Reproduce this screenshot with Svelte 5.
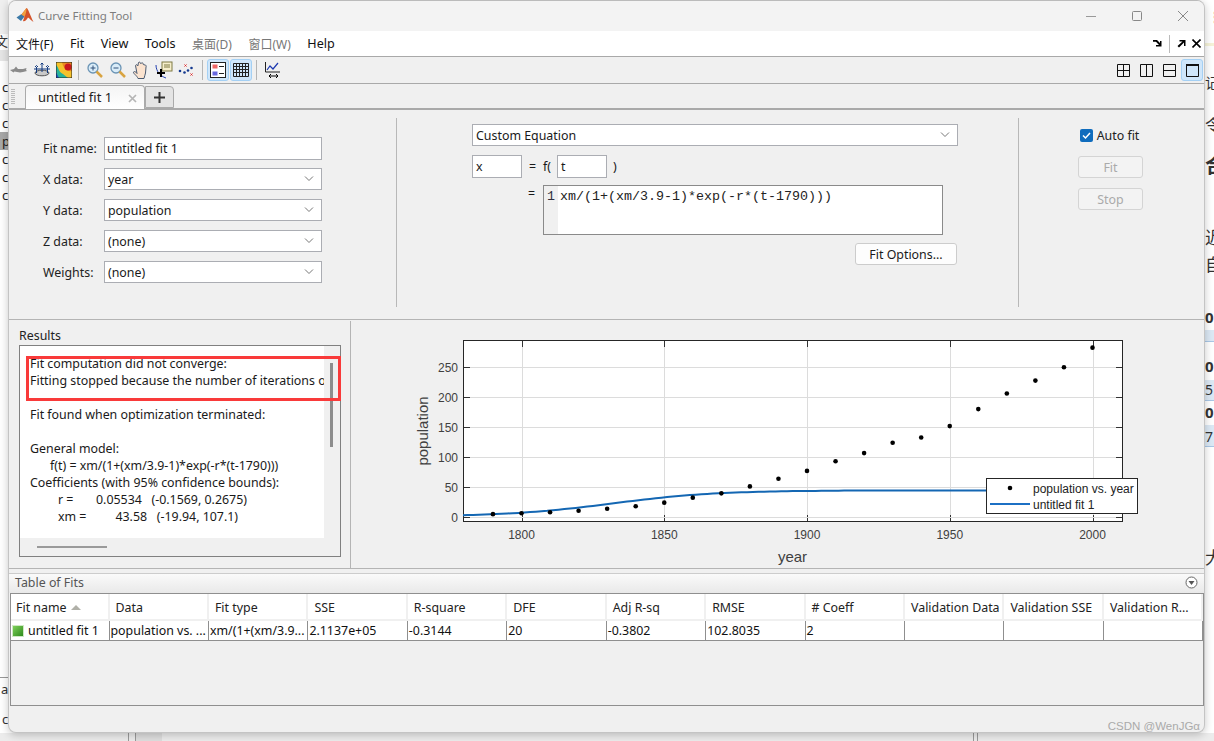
<script>
  const years = Array.from({ length: 22 }, (_, i) => 1790 + i * 10);
  const pop = [3.9, 5.3, 7.2, 9.6, 12.9, 17.1, 23.1, 31.4, 38.6, 50.2, 62.9, 76.0, 92.0, 105.7, 122.8, 131.7, 150.7, 179.0, 205.0, 226.5, 248.7, 281.4];
  const px = (y) => 521.5 + (y - 1800) * 2.855 - 351;
  const py = (v) => 516.5 - v * 0.6 - 321;
  let d = '';
  for (let t = 1779; t <= 1966; t += 2) {
    const f = 43.58 / (1 + (43.58 / 3.9 - 1) * Math.exp(-0.05534 * (t - 1790)));
    d += (d ? 'L' : 'M') + Math.max(px(t), 112).toFixed(1) + ' ' + py(f).toFixed(1);
  }
  const xticks = [1800, 1850, 1900, 1950, 2000];
  const yticks = [0, 50, 100, 150, 200, 250];
  const menus = ['文件(F)', 'Fit', 'View', 'Tools', '桌面(D)', '窗口(W)', 'Help'];
  const fields = [
    ['X data:', 'year'],
    ['Y data:', 'population'],
    ['Z data:', '(none)'],
    ['Weights:', '(none)']
  ];
  const cols = ['Fit name', 'Data', 'Fit type', 'SSE', 'R-square', 'DFE', 'Adj R-sq', 'RMSE', '# Coeff', 'Validation Data', 'Validation SSE', 'Validation R...'];
  const widths = cols.map((_, i) => (i === 0 ? 98.5 : 99.45));
  const cells = ['untitled fit 1', 'population vs. ...', 'xm/(1+(xm/3.9...', '2.1137e+05', '-0.3144', '20', '-0.3802', '102.8035', '2', '', '', ''];
  const leftBits = ['c', 'c', 'c', 'p', 'c', 'c', 'c'];
  const rightBits = [
    ['记', 74, 400, 14], ['令', 116, 400, 16], ['合', 157, 700, 20], ['近', 229, 400, 17], ['自', 256, 400, 17],
    ['0', 308, 700, 15], ['0', 357, 700, 15], ['5', 381, 400, 14], ['0', 403, 700, 15], ['7', 428, 400, 14], ['大', 549, 400, 17]
  ];
  const stripes = [[330, 12], [380, 21], [425, 22]];
</script>

<div class="desk">
  <div class="bits-left">
    {#each leftBits as b, i}
      <div class="bit" class:sel={i === 3}>{b}</div>
    {/each}
  </div>
  <div class="top-left"></div>
  <span class="frag frag-top">文(</span>
  <span class="frag frag-a">a</span>
  <span class="frag frag-c">c</span>
  <div class="band-a"></div>
  <div class="band-b"></div>
  <div class="yellow"></div>
  <span class="dots">⋮</span>
  {#each stripes as s}
    <div class="stripe" style:top="{s[0]}px" style:height="{s[1]}px"></div>
  {/each}
  {#each rightBits as r}
    <span class="rbit" style:top="{r[1]}px" style:font-weight={r[2]} style:font-size="{r[3]}px">{r[0]}</span>
  {/each}
  <div class="under"><i class="u1"></i><i class="u2"></i><i class="u3"></i></div>

  <div class="window">
    <header class="title">
      <svg class="logo" viewBox="0 0 18 18" width="18" height="18" aria-hidden="true">
        <path d="M.5 10.500 5.500 7 8.500 9.500 5 14Z" fill="#3d7aa8"/>
        <path d="M5.500 7.500 10.500 1c1.500 0 3.500 7 7 14-2.500-1.500-4-4-5.500-4.500-1.500 2.500-3.500 4.500-5 3.500L8.500 9.500Z" fill="#d4532a"/>
        <path d="M10.500 1C9.500 1.800 8 4.500 5.500 7.500L8.500 9.500C10 7 10.500 4 10.500 1Z" fill="#f0a040"/>
      </svg>
      <span class="title-text">Curve Fitting Tool</span>
      <div class="winbtns">
        <svg width="12" height="12" aria-hidden="true"><path d="M1 6.500H11" stroke="#999"/></svg>
        <svg width="12" height="12" aria-hidden="true"><rect x="1.500" y="1.500" width="9" height="9" rx="1" fill="none" stroke="#888"/></svg>
        <svg width="12" height="12" aria-hidden="true"><path d="M1 1 11 11M11 1 1 11" stroke="#888"/></svg>
      </div>
    </header>

    <nav class="menubar">
      {#each menus as m, i}
        <span class:dim={i === 4 || i === 5} class:cjk={i === 0 || i === 4 || i === 5}>{m}</span>
      {/each}
      <div class="dock">
        <svg width="9" height="9" viewBox="0 0 9 9" aria-hidden="true"><path d="M0 1h4l3 3V2h1.500v5.500H3V6h3L3 2.800H0Z"/></svg>
        <i></i>
        <svg width="9" height="9" viewBox="0 0 9 9" aria-hidden="true"><path d="M2.500 1h6v6H7V3.500L2 8.500.500 7 5.500 2.500h-3Z"/></svg>
        <svg width="9" height="9" viewBox="0 0 9 9" aria-hidden="true"><path d="M.5.5 8.500 8.500M8.500.5.5 8.500" stroke="#000" stroke-width="1.600"/></svg>
      </div>
    </nav>

    <div class="toolbar">
      <svg class="ti" width="18" height="18" viewBox="0 0 18 18" aria-hidden="true"><path d="M0 9 4 8l2-2.500 2 2.500h5l3.500-1-.5 2 1 1-4 1-3 .5-3-.5-2.500-.5-1 1Z" fill="#8a8a8a"/></svg>
      <svg class="ti" width="18" height="18" viewBox="0 0 18 18" aria-hidden="true"><ellipse cx="9" cy="12" rx="7" ry="2.800" fill="#c9c9c9" stroke="#555"/><path d="M3.500 6v6M9 2v9M14.500 6v6M1 8h16M2 6l1.500-1.500L5 6M7.500 3.500 9 2l1.500 1.500M13 6l1.500-1.500L16 6" stroke="#123a80" fill="none"/></svg>
      <svg class="ti heat" width="16" height="16" viewBox="0 0 16 16" aria-hidden="true"><rect width="16" height="16" fill="#f5c22b"/><path d="M0 10 5 16H0Z" fill="#1b52c8"/><path d="M0 3c3 2 2 7 7 9l5 4H3L0 10Z" fill="#27b39a"/><path d="M6 0h10v9c-5 1-9-3-10-9Z" fill="#e98a20"/><circle cx="12" cy="5" r="3.500" fill="#c9181c"/><path d="M0 0h16v16H0Z" fill="none" stroke="#222"/></svg>
      <b class="sep"></b>
      <svg class="ti" width="18" height="18" viewBox="0 0 18 18" aria-hidden="true"><circle cx="7" cy="7" r="5" fill="#d9ecf8" stroke="#6b94b5" stroke-width="1.300"/><path d="M10.500 10.500 16 16" stroke="#d9a441" stroke-width="2.500"/><path d="M4.500 7h5M7 4.500v5" stroke="#30507a"/></svg>
      <svg class="ti" width="18" height="18" viewBox="0 0 18 18" aria-hidden="true"><circle cx="7" cy="7" r="5" fill="#d9ecf8" stroke="#6b94b5" stroke-width="1.300"/><path d="M10.500 10.500 16 16" stroke="#d9a441" stroke-width="2.500"/><path d="M4.500 7h5" stroke="#30507a"/></svg>
      <svg class="ti" width="18" height="18" viewBox="0 0 18 18" aria-hidden="true"><path d="M6 17.500c-1-3-5-5-4.500-6.500C2.500 10 4 11 5 12.500L3.500 4.500C4 3 5.500 4 5.800 5L6.500 1.500C7.500.5 8.500 1.500 8.500 2.500L9.800 2c1-.5 1.500.5 1.500 1.500L13 4c1 0 1.500 1 1 2l-.5 6c-.5 2-1 3.500-1.500 5.500Z" fill="#fbe3cf" stroke="#4a5a70"/></svg>
      <svg class="ti" width="18" height="18" viewBox="0 0 18 18" aria-hidden="true"><rect x="7" y="1" width="10" height="9" fill="#f6eecb" stroke="#7f7a45"/><path d="M9 4h6M9 6h6" stroke="#7f7a45"/><path d="M1 4c0 6 4 11 10 13" stroke="#2340b0" fill="none"/><path d="M2 12h8M6 8v8" stroke="#000" stroke-width="2"/></svg>
      <svg class="ti" width="16" height="18" viewBox="0 0 16 18" aria-hidden="true"><path d="M6.500 3.500l2 2m0-2-2 2M12.500 12.500l2 2m0-2-2 2" stroke="#d22"/><circle cx="2" cy="10" r="1.300" fill="#14398f"/><circle cx="6.500" cy="11.500" r="1.300" fill="#14398f"/><circle cx="10" cy="9.500" r="1.300" fill="#14398f"/><circle cx="13.500" cy="7" r="1.300" fill="#14398f"/></svg>
      <b class="sep sep2"></b>
      <div class="tog-group">
        <span class="tog"><svg width="18" height="18" viewBox="0 0 18 18" aria-hidden="true"><rect x="1.500" y="1.500" width="15" height="15" fill="#fff" stroke="#222"/><rect x="3.500" y="3.500" width="5" height="4" fill="#e66"/><rect x="3.500" y="10.500" width="5" height="4" fill="#66d"/><path d="M10 5.500h5M10 12.500h5" stroke="#222"/></svg></span>
        <span class="tog"><svg width="18" height="18" viewBox="0 0 18 18" aria-hidden="true"><path d="M1.500 2.500h15v13h-15ZM1.500 5.500h15M1.500 8.500h15M1.500 11.500h15M4.500 2.500v13M7.500 2.500v13M10.500 2.500v13M13.500 2.500v13" fill="none" stroke="#222"/></svg></span>
      </div>
      <b class="sep sep3"></b>
      <svg class="ti" width="18" height="18" viewBox="0 0 18 18" aria-hidden="true"><path d="M1.500 1v10H16" stroke="#222" fill="none"/><path d="M3 9l3-4 3 3 5-6" stroke="#1c38b0" fill="none" stroke-width="1.200"/><path d="M5 15h9M5 15l2-2M5 15l2 2M14 15l-2-2M14 15l-2 2" stroke="#000" fill="none"/></svg>
      <div class="layouts">
        <span><svg width="13" height="13" aria-hidden="true"><path d="M.5.500h12v12H.5ZM6.500.500v12M.5 6.500h12" fill="none" stroke="#111"/></svg></span>
        <span><svg width="13" height="13" aria-hidden="true"><path d="M.5.500h12v12H.5ZM6.500.500v12" fill="none" stroke="#111"/></svg></span>
        <span><svg width="13" height="13" aria-hidden="true"><path d="M.5.500h12v12H.5ZM.5 6.500h12" fill="none" stroke="#111"/></svg></span>
        <span class="on"><svg width="13" height="13" aria-hidden="true"><path d="M.5.500h12v12H.5Z" fill="none" stroke="#111"/><path d="M0 1h13" stroke="#111" stroke-width="2"/></svg></span>
      </div>
    </div>

    <div class="tabs">
      <div class="grip"></div>
      <div class="tab">untitled fit 1
        <svg class="x" width="9" height="9" aria-hidden="true"><path d="M1 1 8 8M8 1 1 8" stroke="#b5b5b5" stroke-width="1.700"/></svg>
      </div>
      <div class="plus"><svg width="11" height="11" aria-hidden="true"><path d="M5.500 0v11M0 5.500h11" stroke="#333" stroke-width="2"/></svg></div>
    </div>

    <section class="form">
      <div class="col-left">
        <div class="row">
          <span class="lab">Fit name:</span>
          <div class="box"><span>untitled fit 1</span></div>
        </div>
        {#each fields as f}
          <div class="row">
            <span class="lab">{f[0]}</span>
            <div class="box"><span>{f[1]}</span><svg class="chev" width="10" height="6" aria-hidden="true"><path d="M1 .5 5 4.500 9 .5" fill="none" stroke="#777"/></svg></div>
          </div>
        {/each}
      </div>
      <div class="col-mid">
        <div class="box wide"><span>Custom Equation</span><svg class="chev" width="10" height="6" aria-hidden="true"><path d="M1 .5 5 4.500 9 .5" fill="none" stroke="#777"/></svg></div>
        <div class="eqrow">
          <div class="box mini"><span>x</span></div>
          <span class="eq1">=</span>
          <span class="eq2">f(</span>
          <div class="box mini"><span>t</span></div>
          <span class="eq3">)</span>
        </div>
        <div class="eqrow2">
          <span class="eq4">=</span>
          <div class="editor"><span class="ln">1</span><span class="code">xm/(1+(xm/3.9-1)*exp(-r*(t-1790)))</span></div>
        </div>
        <div class="optrow"><button class="btn">Fit Options...</button></div>
      </div>
      <div class="col-right">
        <div class="auto"><span class="check"><svg width="13" height="13" aria-hidden="true"><path d="M3 6.500 5.500 9 10 4" fill="none" stroke="#fff" stroke-width="1.500"/></svg></span>Auto fit</div>
        <button class="btn dis">Fit</button>
        <button class="btn dis">Stop</button>
      </div>
    </section>

    <section class="middle">
      <div class="results">
        <div class="rlabel">Results</div>
        <div class="rbox">
          <div class="rtext">
            <p>Fit computation did not converge:</p>
            <p>Fitting stopped because the number of iterations or</p>
            <p>&nbsp;</p>
            <p>Fit found when optimization terminated:</p>
            <p>&nbsp;</p>
            <p>General model:</p>
            <p class="i1">f(t) = xm/(1+(xm/3.9-1)*exp(-r*(t-1790)))</p>
            <p>Coefficients (with 95% confidence bounds):</p>
            <p class="i2 pre">r =       0.05534   (-0.1569, 0.2675)</p>
            <p class="i2 pre">xm =         43.58   (-19.94, 107.1)</p>
          </div>
          <div class="vthumb"></div>
          <div class="hthumb"></div>
        </div>
        <div class="redmark"></div>
      </div>
      <div class="plot">
        <svg width="853" height="246" viewBox="0 0 853 246" role="img" aria-label="population vs. year">
          <rect x="112.500" y="19.500" width="659" height="181" fill="#fff"/>
          {#each xticks as t}
            <path d="M{Math.round(px(t)) + .5} 20V200" stroke="#dcdcdc"/>
            <path d="M{Math.round(px(t)) + .5} 20v6M{Math.round(px(t)) + .5} 200v-6" stroke="#333"/>
            <text x={px(t)} y="218" text-anchor="middle" class="tick">{t}</text>
          {/each}
          {#each yticks as v}
            <path d="M113 {Math.round(py(v)) + .5}H771" stroke="#dcdcdc"/>
            <path d="M113 {Math.round(py(v)) + .5}h6M771 {Math.round(py(v)) + .5}h-6" stroke="#333"/>
            <text x="107" y={py(v) + 5} text-anchor="end" class="tick">{v}</text>
          {/each}
          <rect x="112.500" y="19.500" width="659" height="181" fill="none" stroke="#262626"/>
          <path d={d} fill="none" stroke="#1467b3" stroke-width="2"/>
          {#each years as y, i}
            <circle cx={px(y)} cy={py(pop[i])} r="2.300" fill="#000"/>
          {/each}
          <text x="441.500" y="241" text-anchor="middle" class="axis">year</text>
          <text transform="translate(77 110) rotate(-90)" text-anchor="middle" class="axis">population</text>
          <rect x="635.500" y="157.500" width="151" height="35" fill="#fff" stroke="#262626"/>
          <circle cx="659" cy="167" r="2.300" fill="#000"/>
          <path d="M639 183h40" stroke="#1c70c4" stroke-width="2"/>
          <text x="682" y="172" class="leg">population vs. year</text>
          <text x="682" y="188" class="leg">untitled fit 1</text>
        </svg>
      </div>
    </section>

    <section class="fits">
      <div class="fits-head">
        <span>Table of Fits</span>
        <svg width="13" height="13" aria-hidden="true"><circle cx="6.500" cy="6.500" r="5.500" fill="#fff" stroke="#666"/><path d="M3.500 5h6l-3 4Z" fill="#555"/></svg>
      </div>
      <div class="grid">
        <div class="thead">
          {#each cols as c, i}
            <div class="th" style:width="{widths[i]}px">{c}{#if i === 0}<i class="sort"></i>{/if}</div>
          {/each}
        </div>
        <div class="tbody">
          {#each cols as c, i}
            <div class="td" class:first={i === 0} style:width="{widths[i]}px">{#if i === 0}<i class="swatch"></i>{/if}{cells[i]}</div>
          {/each}
        </div>
      </div>
      <div class="foot"><span class="mark">CSDN @WenJGα</span></div>
    </section>
  </div>
</div>

<style>
  :global(body) { margin: 0; background: #fff; overflow: hidden; }
  .desk { position: relative; width: 1214px; height: 741px; background: #fff; overflow: hidden; font-family: "Noto Sans", "Noto Sans CJK SC", sans-serif; font-size: 12.4px; color: #1a1a1a; }
  .bits-left { position: absolute; left: 0; top: 78px; width: 8px; font-size: 13px; }
  .bit { height: 18px; line-height: 18px; padding-left: 2px; color: #222; }
  .bit.sel { background: #a8a8a8; }
  .top-left { position: absolute; left: 0; top: 0; width: 8px; height: 34px; background: #efefef; }
  .frag { position: absolute; font-size: 13px; color: #333; }
  .frag-top { left: -5px; top: 31px; }
  .frag-a { left: 1px; top: 680px; }
  .frag-c { left: 2px; top: 710px; }
  .band-a { position: absolute; left: 0; top: 50px; width: 8px; height: 11px; background: #e6e6e6; }
  .band-b { position: absolute; left: 0; top: 677px; width: 8px; height: 1px; background: #999; }
  .yellow { position: absolute; left: 1205px; top: 43px; width: 9px; height: 3px; background: #f6f3d8; }
  .dots { position: absolute; left: 1208px; top: 7px; font-size: 14px; font-weight: 700; color: #555; }
  .stripe { position: absolute; left: 1205px; width: 9px; background: #dce9f5; border-bottom: 1px solid #a9c7e6; box-sizing: border-box; }
  .rbit { position: absolute; left: 1205px; color: #333; line-height: 18px; }
  .under { position: absolute; left: 0; top: 733px; width: 1214px; height: 8px; background: #ececec; }
  .under i { position: absolute; top: 0; bottom: 0; }
  .u1 { left: 128px; width: 8px; border-left: 1px solid #999; border-right: 1px solid #999; box-sizing: border-box; }
  .u2 { left: 136px; width: 26px; background: #dedede; }
  .u3 { left: 973px; width: 5px; border-left: 1px solid #999; border-right: 1px solid #999; box-sizing: border-box; }
  .window { position: absolute; left: 8px; top: 0; width: 1197px; height: 733px; box-sizing: border-box; background: #f0f0f0; border: 1px solid #c4c4c4; border-top-color: #bbb; border-radius: 8px; box-shadow: 0 2px 8px rgba(0,0,0,.22); display: flex; flex-direction: column; overflow: hidden; }
  .title { height: 30px; flex: none; display: flex; align-items: center; background: #f3f3f3; padding: 0 0 1px 7px; box-sizing: border-box; }
  .logo { margin-right: 4px; }
  .title-text { font-size: 11.500px; color: #7d7d7d; margin-bottom: 1px; }
  .winbtns { margin-left: auto; display: flex; gap: 34px; padding-right: 15px; }
  .menubar { height: 26px; flex: none; background: #fff; display: flex; align-items: center; padding-left: 7px; gap: 16.500px; border-bottom: 1px solid #a9a9a9; box-sizing: border-box; font-size: 12.600px; color: #111; }
  .menubar .cjk { font-size: 12px; }
  .menubar .dim { color: #777; }
  .dock { margin-left: auto; display: flex; align-items: center; gap: 6px; padding-right: 3px; }
  .dock i { width: 1px; height: 18px; background: #bbb; margin: 0 1px; }
  .toolbar { height: 27px; flex: none; display: flex; align-items: center; padding-left: 1px; border-bottom: 1px solid #a9a9a9; box-sizing: border-box; }
  .ti { margin-right: 5px; flex: none; }
  .heat { margin-right: 6px; }
  .sep { width: 1px; height: 20px; background: #b5b5b5; margin: 0 7px 0 0; flex: none; }
  .sep2 { margin: 0 4px 0 3px; }
  .sep3 { margin: 0 7px 0 0; }
  .tog-group { display: flex; gap: 1px; margin-right: 4px; }
  .tog { width: 22px; height: 22px; display: flex; align-items: center; justify-content: center; background: #cfe6fa; border: 1px solid #a4d0f4; border-radius: 3px; box-sizing: border-box; }
  .layouts { margin-left: auto; display: flex; padding-right: 1px; gap: 1px; }
  .layouts span { width: 22px; height: 22px; display: flex; align-items: center; justify-content: center; box-sizing: border-box; }
  .layouts .on { background: #cfe6fa; border: 1px solid #a4d0f4; border-radius: 3px; }
  .tabs { height: 26px; flex: none; position: relative; display: flex; align-items: flex-end; padding-left: 16px; border-bottom: 2px solid #a9a9a9; box-sizing: border-box; }
  .grip { position: absolute; left: 2px; top: 5px; width: 4px; height: 16px; background: repeating-linear-gradient(#bbb 0 1px, transparent 1px 2px); }
  .tab { width: 120px; height: 24px; box-sizing: border-box; padding-left: 12px; line-height: 23px; font-size: 13px; background: linear-gradient(#f4f4f4, #fff); border: 1px solid #aaa; border-bottom: 0; border-radius: 4px 4px 0 0; position: relative; margin-bottom: -1px; color: #222; }
  .tab .x { position: absolute; right: 7px; top: 8px; }
  .plus { width: 29px; height: 22px; box-sizing: border-box; border: 1px solid #aaa; border-radius: 0 4px 0 0; background: #e4e4e4; display: flex; align-items: center; justify-content: center; }
  .form { height: 209px; flex: none; display: flex; border-bottom: 1px solid #b4b4b4; }
  .col-left { width: 387px; flex: none; padding-top: 27px; padding-left: 34px; box-sizing: border-box; display: flex; flex-direction: column; gap: 9px; }
  .row { display: flex; align-items: center; height: 22px; }
  .lab { width: 61px; color: #222; flex: none; }
  .box { width: 218px; height: 22px; box-sizing: border-box; background: #fff; border: 1px solid #abadb3; display: flex; align-items: center; justify-content: space-between; padding: 0 7px 0 3px; position: relative; flex: none; }
  .col-left .row:first-child .box { height: 23px; padding-left: 2px; }
  .chev { flex: none; }
  .col-mid { width: 622px; flex: none; box-sizing: border-box; border-left: 1px solid #b8b8b8; margin: 8px 0 12px; padding: 6px 0 0 75px; }
  .wide { width: 486px; height: 22px; }
  .eqrow { display: flex; align-items: center; margin-top: 9px; height: 23px; }
  .mini { width: 50px; height: 23px; padding-left: 3px; }
  .eq1 { margin-left: 7px; width: 14px; }
  .eq2 { width: 14px; }
  .eq3 { margin-left: 6px; }
  .eqrow2 { display: flex; margin-top: 7px; padding-left: 56px; }
  .eq4 { width: 15px; height: 20px; }
  .editor { width: 400px; height: 50px; box-sizing: border-box; background: #fff; border: 1px solid #8a8a8a; display: flex; font-family: "Liberation Mono", monospace; font-size: 13.330px; }
  .ln { width: 14px; background: #f0f0f0; text-align: center; color: #303040; padding-top: 3px; }
  .code { padding: 3px 0 0 2px; color: #222; white-space: nowrap; }
  .optrow { display: flex; justify-content: flex-end; padding-right: 61px; margin-top: 8px; }
  .btn { box-sizing: border-box; background: #fdfdfd; border: 1px solid #ccc; border-radius: 3px; font: inherit; height: 22px; width: 102px; padding: 0; color: #1a1a1a; }
  .col-right { flex: 1; margin: 8px 0 12px; border-left: 1px solid #b8b8b8; padding-top: 8px; display: flex; flex-direction: column; align-items: center; padding-right: 2px; box-sizing: border-box; }
  .auto { display: flex; align-items: center; gap: 4px; height: 18px; margin-bottom: 12px; padding-right: 2px; color: #222; }
  .check { width: 13px; height: 13px; background: #0f6cbd; border-radius: 2px; display: block; }
  .dis { width: 65px; height: 22px; color: #aaa; background: #f3f3f3; border-color: #d4d4d4; margin-bottom: 10px; }
  .middle { height: 247px; flex: none; display: flex; border-bottom: 1px solid #b4b4b4; margin-top: 1px; }
  .results { width: 342px; flex: none; box-sizing: border-box; border-right: 1px solid #b4b4b4; position: relative; padding: 7px 0 0 10px; }
  .rlabel { height: 17px; line-height: 16px; color: #222; }
  .rbox { position: relative; width: 322px; height: 212px; box-sizing: border-box; border: 1px solid #808080; background: #f0f0f0; overflow: hidden; }
  .rtext { width: 304px; height: 192px; background: #fff; padding: 9px 0 0 10px; box-sizing: border-box; overflow: hidden; white-space: nowrap; }
  .rtext p { margin: 0; height: 17px; line-height: 17px; }
  .i1 { padding-left: 20px; }
  .i2 { padding-left: 28px; }
  .pre { white-space: pre; }
  .vthumb { position: absolute; right: 7px; top: 17px; width: 3px; height: 84px; background: #8d8d8d; }
  .hthumb { position: absolute; left: 17px; top: 200px; width: 70px; height: 2px; background: #9a9a9a; }
  .redmark { position: absolute; left: 17px; top: 35px; width: 315px; height: 45px; box-sizing: border-box; border: 3px solid #f93a3a; }
  .plot { flex: 1; min-width: 0; }
  .plot svg { display: block; }
  .tick { font: 12px "Liberation Sans", sans-serif; fill: #404040; }
  .axis { font: 15px "Liberation Sans", sans-serif; fill: #404040; }
  .leg { font: 12px "Liberation Sans", sans-serif; fill: #222; }
  .fits { flex: 1; display: flex; flex-direction: column; min-height: 0; margin-top: 4px; }
  .fits-head { height: 20px; flex: none; display: flex; align-items: center; justify-content: space-between; padding: 0 6px 3px; background: linear-gradient(#fafafa, #e9e9e9); color: #555; border-top: 1px solid #ccc; box-sizing: border-box; }
  .grid { flex: none; height: 113px; margin-left: 1px; width: 1194px; box-sizing: border-box; border: 1px solid #8f8f8f; background: #f0f0f0; }
  .thead { display: flex; height: 27px; background: #fff; }
  .th { box-sizing: border-box; flex: none; padding-left: 6px; line-height: 27px; white-space: nowrap; border-right: 2px solid #f0f0f0; border-bottom: 2px solid #f0f0f0; color: #222; }
  .th:first-child { padding-left: 5px; }
  .sort { display: inline-block; width: 0; height: 0; border: 5px solid transparent; border-bottom: 5px solid #b0b0a8; border-top: 0; margin-left: 4px; vertical-align: 2px; }
  .tbody { display: flex; height: 19px; background: #fff; border-bottom: 1px solid #8f8f8f; }
  .td { box-sizing: border-box; flex: none; padding-left: 1px; white-space: nowrap; overflow: hidden; border-right: 1px solid #8f8f8f; display: flex; align-items: center; color: #111; }
  .swatch { width: 10px; height: 10px; margin-right: 4px; background: linear-gradient(135deg, #7fd05a, #2e8b1c); border: 1px solid #cfe8c4; flex: none; }
  .foot { flex: 1; position: relative; }
  .mark { position: absolute; right: 4px; bottom: 0; font: 11.500px "Liberation Sans", sans-serif; color: #aaa; }
</style>
